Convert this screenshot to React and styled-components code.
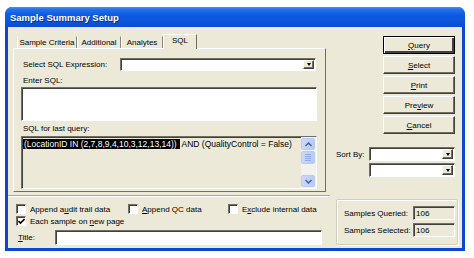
import React from 'react';
import styled, { createGlobalStyle } from 'styled-components';

const GlobalStyle = createGlobalStyle`
  html, body {
    margin: 0;
    padding: 0;
    background: #fff;
  }
  body {
    font-family: "Liberation Sans", Arial, sans-serif;
    font-size: 8px;
    color: #000;
  }
  #root {
    padding: 7px 0 0 5px;
  }
  * { box-sizing: border-box; }
`;

const Window = styled.div`
  width: 460px;
  height: 244px;
  display: flex;
  flex-direction: column;
  background: #0a48d4;
  border-radius: 7px 7px 0 0;
  padding: 0 3px 3px;
  overflow: hidden;
`;

const TitleBar = styled.div`
  height: 20px;
  margin: 0 -3px;
  padding-left: 5px;
  display: flex;
  align-items: center;
  color: #fff;
  font-family: "Liberation Sans", Arial, sans-serif;
  font-weight: bold;
  font-size: 9.5px;
  text-shadow: 1px 1px 0 #0b2c8a;
  border-radius: 7px 7px 0 0;
  background: linear-gradient(#4a94f8 0%, #2470ec 12%, #0c5ae0 40%, #0a55db 75%, #0a4cd2 100%);
`;

const Body = styled.div`
  flex: 1;
  display: flex;
  gap: 10px;
  background: #ece9d8;
  padding: 7px 4px 0 5px;
`;

const LeftColumn = styled.div`
  width: 313px;
  display: flex;
  flex-direction: column;
`;

const TabStrip = styled.div`
  height: 15px;
  display: flex;
  align-items: flex-end;
  padding-left: 4px;
  margin-bottom: -1px;
  position: relative;
  z-index: 1;
`;

const Tab = styled.div`
  width: ${p => p.$w}px;
  height: ${p => (p.$active ? 15 : 12)}px;
  display: flex;
  align-items: center;
  justify-content: center;
  padding-bottom: ${p => (p.$active ? 3 : 0)}px;
  background: #ece9d8;
  border-left: 1px solid #fff;
  border-top: 1px solid ${p => (p.$active ? '#fff' : 'transparent')};
  border-right: 1px solid ${p => (p.$active ? '#716f64' : '#8a877a')};
  margin-bottom: ${p => (p.$active ? 0 : 1)}px;
  white-space: nowrap;
`;

const Panel = styled.div`
  height: 144px;
  display: flex;
  flex-direction: column;
  border: 1px solid;
  border-color: #fff #716f64 #716f64 #fff;
  padding: 9px 9px 2px 7px;
`;

const FieldRow = styled.div`
  display: flex;
  align-items: center;
  height: 13px;
`;

const Label = styled.div`
  width: ${p => p.$w || 'auto'}${p => (p.$w ? 'px' : '')};
  margin-left: 2px;
  margin-top: ${p => p.$mt || 0}px;
  height: 10px;
  line-height: 10px;
  white-space: nowrap;
`;

const Combo = styled.div`
  flex: ${p => (p.$w ? 'none' : 1)};
  width: ${p => (p.$w ? `${p.$w}px` : 'auto')};
  height: ${p => p.$h || 13}px;
  display: flex;
  justify-content: flex-end;
  align-items: stretch;
  background: #fff;
  border: 1px solid;
  border-color: #716f64 #fff #fff #716f64;
  box-shadow: inset 1px 1px 0 #404040;
  padding: 1px 1px 1px 2px;
`;

const DropButton = styled.div`
  width: 11px;
  display: flex;
  align-items: center;
  justify-content: center;
  background: #ece9d8;
  border: 1px solid;
  border-color: #fff #404040 #404040 #fff;
  box-shadow: inset -1px -1px 0 #716f64;
  &::after {
    content: '';
    border-left: 2.5px solid transparent;
    border-right: 2.5px solid transparent;
    border-top: 3px solid #000;
  }
`;

const TextBox = styled.div`
  height: ${p => p.$h}px;
  margin-top: ${p => p.$mt || 0}px;
  margin-right: -1px;
  display: flex;
  background: ${p => (p.$readonly ? '#ece9d8' : '#fff')};
  border: 1px solid;
  border-color: #716f64 #fff #fff #716f64;
  box-shadow: inset 1px 1px 0 #404040;
`;

const SqlText = styled.div`
  flex: 1;
  padding: 2px 1px;
  font-size: 8.5px;
  line-height: 11px;
  white-space: nowrap;
  overflow: hidden;
`;

const Selected = styled.span`
  background: #000;
  color: #fff;
  padding: 0 3px 0 1px;
`;

const ScrollBar = styled.div`
  width: 15px;
  display: flex;
  flex-direction: column;
  padding: 1px 1px 1px 0;
  background: #f3f1ec;
`;

const ScrollBtn = styled.div`
  height: 12px;
  display: flex;
  align-items: center;
  justify-content: center;
  border: 1px solid #b8cbf4;
  border-radius: 2px;
  background: linear-gradient(90deg, #cad9fb, #b6cbf8);
`;

const ScrollThumb = styled(ScrollBtn)`
  margin-top: 1px;
  height: 13px;
  flex-direction: column;
  gap: 1px;
  span {
    width: 6px;
    height: 1px;
    background: #8faaee;
  }
`;

const ScrollTrack = styled.div`
  flex: 1;
`;

const Separator = styled.div`
  margin: 3px -4px 0 -5px;
  border-top: 1px solid #aca899;
  border-bottom: 1px solid #fff;
`;

const CheckRow = styled.div`
  height: 12px;
  display: flex;
  align-items: center;
  margin-top: ${p => p.$mt || 0}px;
  padding-left: 3px;
`;

const CheckItem = styled.label`
  width: ${p => (p.$w ? `${p.$w}px` : 'auto')};
  display: flex;
  align-items: center;
  gap: 4px;
  white-space: nowrap;
`;

const Box = styled.span`
  width: 10px;
  height: 10px;
  display: flex;
  align-items: center;
  justify-content: center;
  background: #fff;
  border: 1px solid;
  border-color: #716f64 #fff #fff #716f64;
  box-shadow: inset 1px 1px 0 #404040;
`;

const TitleRow = styled.div`
  height: 15px;
  margin-top: 3px;
  display: flex;
  align-items: center;
  padding-left: 5px;
  padding-right: 4px;
`;

const TitleLabel = styled.div`
  width: 37px;
`;

const TitleInput = styled.div`
  flex: 1;
  height: 15px;
  background: #fff;
  border: 1px solid;
  border-color: #716f64 #fff #fff #716f64;
  box-shadow: inset 1px 1px 0 #404040;
`;

const RightColumn = styled.div`
  width: 122px;
  display: flex;
  flex-direction: column;
  padding-top: 2px;
`;

const ButtonStack = styled.div`
  align-self: flex-end;
  margin-right: 3px;
  display: flex;
  flex-direction: column;
  gap: 2px;
`;

const Button = styled.div`
  width: 72px;
  height: 18px;
  display: flex;
  align-items: center;
  justify-content: center;
  background: #ece9d8;
  border: 1px solid;
  border-color: ${p => (p.$default ? '#000' : '#fff #404040 #404040 #fff')};
  box-shadow: ${p =>
    p.$default
      ? 'inset 1px 1px 0 #fff, inset -2px -2px 0 #404040'
      : 'inset -1px -1px 0 #716f64'};
`;

const SortGrid = styled.div`
  margin-top: 13px;
  display: grid;
  grid-template-columns: 33px 86px;
  grid-template-rows: 14px 14px;
  row-gap: 2px;
  align-items: center;
`;

const SortLabel = styled.div`
  white-space: nowrap;
`;

const GroupBox = styled.div`
  margin-top: 22px;
  height: 46px;
  display: flex;
  flex-direction: column;
  gap: 3px;
  padding: 6px 2px 0 7px;
  border: 1px solid #d0d0bf;
  box-shadow: inset 1px 1px 0 #fff, 1px 1px 0 #fff;
  border-radius: 2px;
`;

const StatRow = styled.div`
  height: 14px;
  display: flex;
  align-items: center;
  justify-content: space-between;
`;

const StatValue = styled.div`
  width: 42px;
  height: 14px;
  padding: 1px 2px;
  line-height: 11px;
  background: #ece9d8;
  border: 1px solid;
  border-color: #716f64 #fff #fff #716f64;
  box-shadow: inset 1px 1px 0 #404040;
`;

const Arrow = ({ up }) => (
  <svg width="7" height="5" viewBox="0 0 7 5">
    <path
      d={up ? 'M0.5 4 L3.5 1 L6.5 4' : 'M0.5 1 L3.5 4 L6.5 1'}
      fill="none"
      stroke="#4d6185"
      strokeWidth="1.5"
    />
  </svg>
);

const Check = () => (
  <svg width="7" height="7" viewBox="0 0 7 7">
    <path d="M0.5 3 L2.5 5 L6.5 1" fill="none" stroke="#000" strokeWidth="1.6" />
  </svg>
);

export default function App() {
  return (
    <>
      <GlobalStyle />
      <Window>
        <TitleBar>Sample Summary Setup</TitleBar>
        <Body>
          <LeftColumn>
            <TabStrip>
              <Tab $w={60}>Sample Criteria</Tab>
              <Tab $w={44}>Additional</Tab>
              <Tab $w={42}>Analytes</Tab>
              <Tab $w={34} $active>SQL</Tab>
            </TabStrip>
            <Panel>
              <FieldRow>
                <Label $w={97}>Select SQL Expression:</Label>
                <Combo>
                  <DropButton />
                </Combo>
              </FieldRow>
              <Label $mt={5}>Enter SQL:</Label>
              <TextBox $h={34} $mt={1} />
              <Label $mt={3}>SQL for last query:</Label>
              <TextBox $h={53} $mt={2} $readonly>
                <SqlText>
                  <Selected>(LocationID IN (2,7,8,9,4,10,3,12,13,14))</Selected> AND
                  (QualityControl = False)
                </SqlText>
                <ScrollBar>
                  <ScrollBtn><Arrow up /></ScrollBtn>
                  <ScrollThumb><span /><span /><span /><span /></ScrollThumb>
                  <ScrollTrack />
                  <ScrollBtn><Arrow /></ScrollBtn>
                </ScrollBar>
              </TextBox>
            </Panel>
            <Separator />
            <CheckRow $mt={6}>
              <CheckItem $w={112}>
                <Box />
                <span>Append a<u>u</u>dit trail data</span>
              </CheckItem>
              <CheckItem $w={100}>
                <Box />
                <span><u>A</u>ppend QC data</span>
              </CheckItem>
              <CheckItem>
                <Box />
                <span>E<u>x</u>clude internal data</span>
              </CheckItem>
            </CheckRow>
            <CheckRow>
              <CheckItem>
                <Box><Check /></Box>
                <span>Each sample on <u>n</u>ew page</span>
              </CheckItem>
            </CheckRow>
            <TitleRow>
              <TitleLabel><u>T</u>itle:</TitleLabel>
              <TitleInput />
            </TitleRow>
          </LeftColumn>
          <RightColumn>
            <ButtonStack>
              <Button $default><span><u>Q</u>uery</span></Button>
              <Button><span><u>S</u>elect</span></Button>
              <Button><span><u>P</u>rint</span></Button>
              <Button><span>Pre<u>v</u>iew</span></Button>
              <Button><span><u>C</u>ancel</span></Button>
            </ButtonStack>
            <SortGrid>
              <SortLabel>Sort By:</SortLabel>
              <Combo $w={86} $h={14}><DropButton /></Combo>
              <span />
              <Combo $w={86} $h={14}><DropButton /></Combo>
            </SortGrid>
            <GroupBox>
              <StatRow>
                <span>Samples Queried:</span>
                <StatValue>106</StatValue>
              </StatRow>
              <StatRow>
                <span>Samples Selected:</span>
                <StatValue>106</StatValue>
              </StatRow>
            </GroupBox>
          </RightColumn>
        </Body>
      </Window>
    </>
  );
}
